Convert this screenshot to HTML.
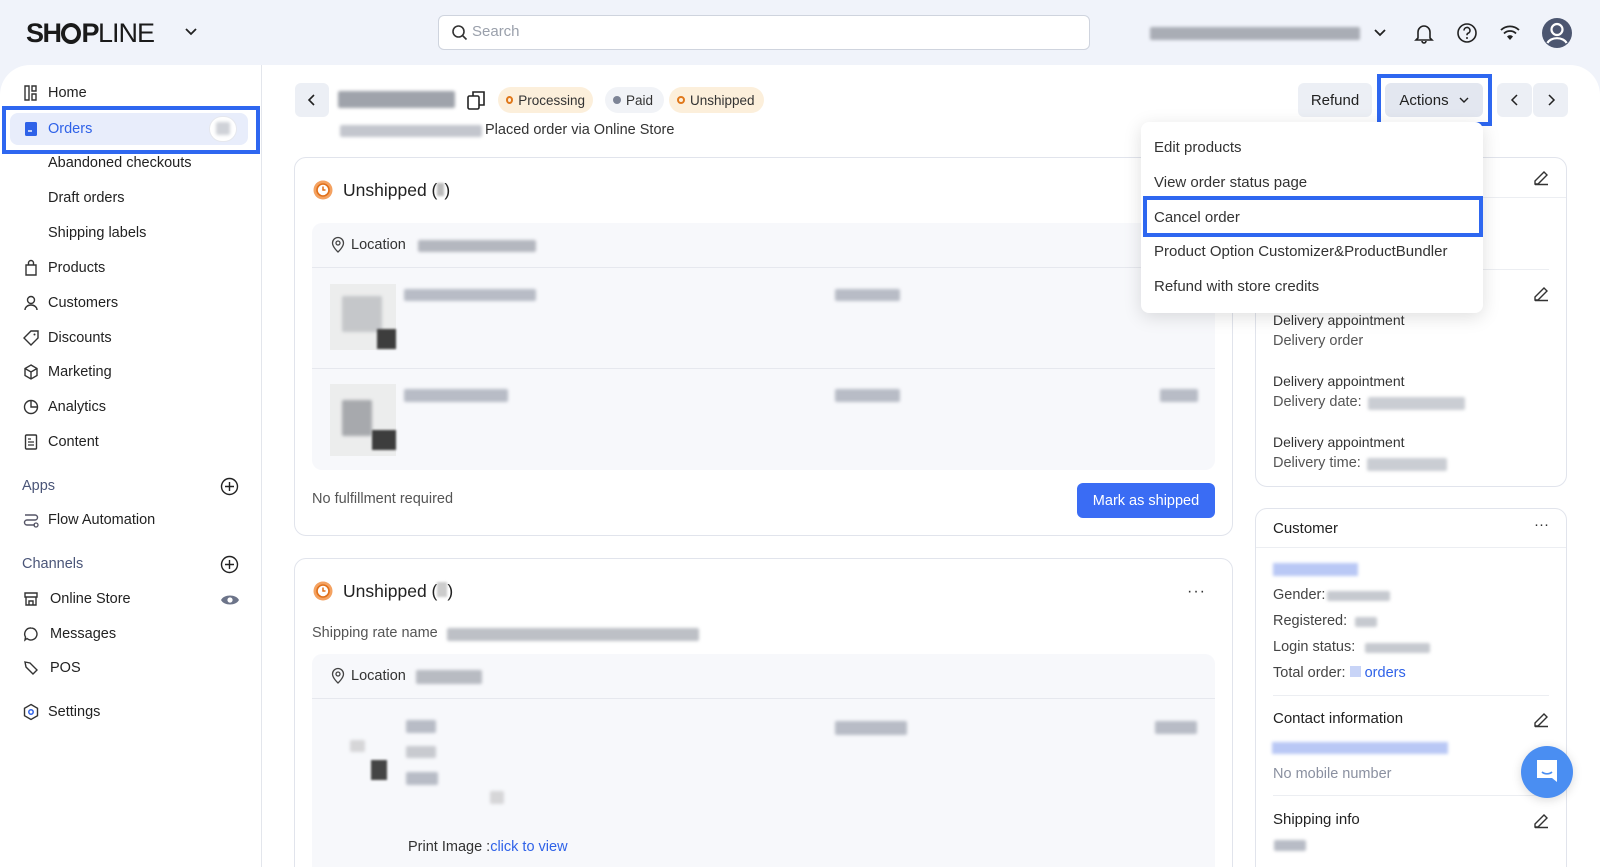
<!DOCTYPE html>
<html style="width:1600px;height:867px;overflow:hidden;background:#fff"><head><meta charset="utf-8"><style>
*{box-sizing:border-box;margin:0;padding:0}
body{width:1600px;height:867px;overflow:hidden;background:#fff;font-family:"Liberation Sans",sans-serif;color:#222;font-size:14px}
#w{position:relative;width:1600px;height:867px;overflow:hidden;background:#f0f3fa}
.a{position:absolute}
.blur{position:absolute;background:#b8bcc6;filter:blur(1.5px);border-radius:2px}
.blb{position:absolute;background:#b9c8f5;filter:blur(1.5px)}
.nav{position:absolute;left:48px;font-size:14.5px;color:#222}
.ic{position:absolute;left:22px;width:18px;height:18px}
.card{position:absolute;background:#fff;border:1px solid #e1e4ec;border-radius:12px}
.btn{position:absolute;background:#eceff5;border-radius:6px;font-size:15px;display:flex;align-items:center;justify-content:center;color:#222}
.badge{position:absolute;top:87px;height:26px;border-radius:13px;font-size:13.5px;display:flex;align-items:center;padding:0 8px;color:#333}
.dd{position:absolute;left:1154px;font-size:15px;color:#333}
.rt{position:absolute;left:1273px;font-size:14.5px;color:#333}
</style></head><body><div id="w">
<!-- top bar -->
<div class="a" style="left:26px;top:18px;font-size:27px;font-weight:bold;letter-spacing:-1.5px;color:#1a1a1a">SH<span style="display:inline-block;width:20px;height:21px;border:4px solid #1a1a1a;border-radius:50%;vertical-align:-2px;margin-right:1px"></span>P<span style="font-weight:normal;letter-spacing:-1px">LINE</span></div>
<svg class="a" style="left:184px;top:27px" width="14" height="10"><path d="M2 2l5 5 5-5" stroke="#222" stroke-width="1.8" fill="none"/></svg>
<div class="a" style="left:438px;top:15px;width:652px;height:35px;background:#fff;border:1px solid #cfd4de;border-radius:6px"></div>
<svg class="a" style="left:451px;top:24px" width="18" height="18"><circle cx="7.5" cy="7.5" r="5.5" stroke="#333" stroke-width="1.6" fill="none"/><path d="M11.5 11.5l4 4" stroke="#333" stroke-width="1.6"/></svg>
<div class="a" style="left:472px;top:23px;font-size:15px;color:#9aa0ab">Search</div>
<div class="blur" style="left:1150px;top:27px;width:210px;height:13px;background:#a9adb5"></div>
<svg class="a" style="left:1373px;top:28px" width="14" height="10"><path d="M2 2l5 5 5-5" stroke="#222" stroke-width="1.8" fill="none"/></svg>
<svg class="a" style="left:1413px;top:22px" width="22" height="22"><path d="M5 16V10a6 6 0 0 1 12 0v6l2 2H3z M9 19a2 2 0 0 0 4 0" stroke="#222" stroke-width="1.6" fill="none"/></svg>
<svg class="a" style="left:1456px;top:22px" width="22" height="22"><circle cx="11" cy="11" r="9" stroke="#222" stroke-width="1.6" fill="none"/><path d="M8 8.5a3 3 0 1 1 4 2.8c-1 .4-1 1-1 2" stroke="#222" stroke-width="1.6" fill="none"/><circle cx="11" cy="16" r="1" fill="#222"/></svg>
<svg class="a" style="left:1499px;top:23px" width="22" height="20"><path d="M2 7a13 13 0 0 1 18 0M5 10.5a8.5 8.5 0 0 1 12 0" stroke="#222" stroke-width="1.8" fill="none"/><path d="M8 13.5a4 4 0 0 1 6 0L11 17z" fill="#222"/></svg>
<svg class="a" style="left:1541px;top:17px" width="32" height="32"><circle cx="16" cy="16" r="15" fill="#4c5670"/><circle cx="16" cy="12.5" r="5.5" stroke="#fff" stroke-width="2.2" fill="none"/><path d="M6.5 26a10 7 0 0 1 19 0" stroke="#fff" stroke-width="2.2" fill="none"/></svg>

<!-- main white area -->
<div class="a" style="left:0;top:65px;width:1600px;height:802px;background:#fff;border-radius:30px 30px 0 0"></div>
<div class="a" style="left:261px;top:65px;width:1px;height:802px;background:#e3e6ec"></div>

<!-- sidebar -->
<svg class="ic" style="top:84px" viewBox="0 0 18 18"><path d="M3 2h4v14H3zM10 2h4v5h-4zM10 10h4v6h-4z" stroke="#333" stroke-width="1.4" fill="none"/></svg>
<div class="nav" style="top:85px">Home</div>
<div class="a" style="left:10px;top:113px;width:238px;height:32px;background:#e8edfb;border-radius:8px"></div>
<div class="a" style="left:2px;top:106px;width:258px;height:48px;border:4px solid #2e67f0"></div>
<svg class="ic" style="top:120px" viewBox="0 0 18 18"><rect x="3" y="2" width="12" height="14" rx="1.5" fill="#2f62e8"/><path d="M6 11h4" stroke="#fff" stroke-width="1.4"/></svg>
<div class="nav" style="top:121px;color:#2f62e8">Orders</div>
<div class="a" style="left:209px;top:116px;width:28px;height:26px;background:#fff;border-radius:13px;border:1px solid #e6e8ee"></div>
<div class="blur" style="left:216px;top:122px;width:14px;height:13px;background:#cfd2d8"></div>
<div class="nav" style="top:155px">Abandoned checkouts</div>
<div class="nav" style="top:190px">Draft orders</div>
<div class="nav" style="top:225px">Shipping labels</div>
<svg class="ic" style="top:259px" viewBox="0 0 18 18"><path d="M4 6h10v10H4zM6.5 6V4a2.5 2.5 0 0 1 5 0v2" stroke="#333" stroke-width="1.4" fill="none"/></svg>
<div class="nav" style="top:260px">Products</div>
<svg class="ic" style="top:294px" viewBox="0 0 18 18"><circle cx="9" cy="6" r="3.5" stroke="#333" stroke-width="1.4" fill="none"/><path d="M3 16a6 5 0 0 1 12 0" stroke="#333" stroke-width="1.4" fill="none"/></svg>
<div class="nav" style="top:295px">Customers</div>
<svg class="ic" style="top:329px" viewBox="0 0 18 18"><path d="M9 2h7v7l-7 7-7-7z" stroke="#333" stroke-width="1.4" fill="none"/><circle cx="12.5" cy="5.5" r="1" fill="#333"/></svg>
<div class="nav" style="top:330px">Discounts</div>
<svg class="ic" style="top:363px" viewBox="0 0 18 18"><path d="M9 2l6 3.5v7L9 16l-6-3.5v-7zM3 5.5L9 9l6-3.5M9 9v7" stroke="#333" stroke-width="1.4" fill="none"/></svg>
<div class="nav" style="top:364px">Marketing</div>
<svg class="ic" style="top:398px" viewBox="0 0 18 18"><circle cx="9" cy="9" r="6.5" stroke="#333" stroke-width="1.4" fill="none"/><path d="M9 2.5V9h6.5" stroke="#333" stroke-width="1.4" fill="none"/></svg>
<div class="nav" style="top:399px">Analytics</div>
<svg class="ic" style="top:433px" viewBox="0 0 18 18"><rect x="3.5" y="2" width="11" height="14" rx="1" stroke="#333" stroke-width="1.4" fill="none"/><path d="M6 6h3M6 9h6M6 12h6" stroke="#333" stroke-width="1.3"/></svg>
<div class="nav" style="top:434px">Content</div>
<div class="a" style="left:22px;top:478px;font-size:14.5px;color:#4a5578">Apps</div>
<svg class="a" style="left:220px;top:477px" width="19" height="19"><circle cx="9.5" cy="9.5" r="8" stroke="#222" stroke-width="1.4" fill="none"/><path d="M9.5 5v9M5 9.5h9" stroke="#222" stroke-width="1.4"/></svg>
<svg class="ic" style="top:511px" viewBox="0 0 18 18"><path d="M3 4h10a2.5 2.5 0 0 1 0 5H5a2.5 2.5 0 0 0 0 5h8" stroke="#556" stroke-width="1.4" fill="none"/><circle cx="14" cy="14" r="2" stroke="#556" stroke-width="1.3" fill="none"/></svg>
<div class="nav" style="top:512px">Flow Automation</div>
<div class="a" style="left:22px;top:556px;font-size:14.5px;color:#4a5578">Channels</div>
<svg class="a" style="left:220px;top:555px" width="19" height="19"><circle cx="9.5" cy="9.5" r="8" stroke="#222" stroke-width="1.4" fill="none"/><path d="M9.5 5v9M5 9.5h9" stroke="#222" stroke-width="1.4"/></svg>
<svg class="ic" style="top:590px" viewBox="0 0 18 18"><path d="M3 3h12v4H3zM4 7v8h10V7M7 15v-4h4v4" stroke="#333" stroke-width="1.4" fill="none"/></svg>
<div class="nav" style="left:50px;top:591px">Online Store</div>
<svg class="a" style="left:220px;top:593px" width="20" height="14"><path d="M1 7c3-6 15-6 18 0-3 6-15 6-18 0z" fill="#6c7489"/><circle cx="10" cy="7" r="2.6" fill="#fff"/></svg>
<svg class="ic" style="top:625px" viewBox="0 0 18 18"><path d="M9 3a6 6 0 1 1-4 10.5L3 15l.5-3A6 6 0 0 1 9 3z" stroke="#333" stroke-width="1.4" fill="none"/></svg>
<div class="nav" style="left:50px;top:626px">Messages</div>
<svg class="ic" style="top:659px" viewBox="0 0 18 18"><path d="M3 3l5 1 7 7-4 4-7-7z" stroke="#333" stroke-width="1.4" fill="none"/></svg>
<div class="nav" style="left:50px;top:660px">POS</div>
<svg class="ic" style="top:703px" viewBox="0 0 18 18"><path d="M9 1.5l6.5 3.75v7.5L9 16.5l-6.5-3.75v-7.5z" stroke="#333" stroke-width="1.4" fill="none"/><circle cx="9" cy="9" r="2.2" stroke="#2f62e8" stroke-width="1.5" fill="none"/></svg>
<div class="nav" style="top:704px">Settings</div>

<!-- header content -->
<div class="btn" style="left:295px;top:83px;width:34px;height:34px"><svg width="10" height="12"><path d="M7 1L2 6l5 5" stroke="#222" stroke-width="1.6" fill="none"/></svg></div>
<div class="blur" style="left:338px;top:91px;width:117px;height:17px;background:#9fa3ab"></div>
<svg class="a" style="left:466px;top:89px" width="22" height="22"><rect x="2" y="7" width="11" height="13" rx="1.5" stroke="#222" stroke-width="1.6" fill="none"/><path d="M7 7V3h11v13h-5" stroke="#222" stroke-width="1.6" fill="none"/></svg>
<div class="badge" style="left:498px;width:95px;background:#fcefdb"><span style="display:inline-block;width:8px;height:8px;border:2px solid #e0781b;border-radius:50%;margin-right:5px"></span>Processing</div>
<div class="badge" style="left:605px;width:59px;background:#f1f3f7"><span style="display:inline-block;width:8px;height:8px;background:#7d8496;border-radius:50%;margin-right:5px"></span>Paid</div>
<div class="badge" style="left:669px;width:95px;background:#fcefdb"><span style="display:inline-block;width:8px;height:8px;border:2px solid #e0781b;border-radius:50%;margin-right:5px"></span>Unshipped</div>
<div class="blur" style="left:340px;top:125px;width:142px;height:12px;background:#c3c6cd"></div>
<div class="a" style="left:485px;top:122px;font-size:14.5px;color:#333">Placed order via Online Store</div>

<div class="btn" style="left:1298px;top:83px;width:74px;height:34px">Refund</div>
<div class="btn" style="left:1385px;top:83px;width:98px;height:34px;background:#e3e7f0">Actions <svg style="margin-left:10px" width="10" height="8"><path d="M1 2l4 4 4-4" stroke="#222" stroke-width="1.4" fill="none"/></svg></div>
<div class="a" style="left:1377px;top:74px;width:115px;height:52px;border:4px solid #2e67f0"></div>
<div class="btn" style="left:1497px;top:83px;width:35px;height:34px"><svg width="10" height="12"><path d="M7 1L2 6l5 5" stroke="#222" stroke-width="1.5" fill="none"/></svg></div>
<div class="btn" style="left:1533px;top:83px;width:35px;height:34px"><svg width="10" height="12"><path d="M3 1l5 5-5 5" stroke="#222" stroke-width="1.5" fill="none"/></svg></div>

<!-- card 1 -->
<div class="card" style="left:294px;top:157px;width:939px;height:379px"></div>
<svg class="a" style="left:313px;top:180px" width="20" height="20"><circle cx="10" cy="10" r="9.5" fill="#f4a261"/><circle cx="10" cy="10" r="6" fill="#fff" stroke="#e0701a" stroke-width="1.6"/><path d="M10 6.5V10h2.5" stroke="#e0701a" stroke-width="1.5" fill="none"/></svg>
<div class="a" style="left:343px;top:180px;font-size:17.5px;color:#222">Unshipped (<span style="display:inline-block;width:7px;height:13px;background:#bbb;filter:blur(1px)"></span>)</div>
<div class="a" style="left:312px;top:223px;width:903px;height:247px;background:#f7f8fb;border-radius:10px"></div>
<div class="a" style="left:312px;top:267px;width:903px;height:1px;background:#e6e8ee"></div>
<div class="a" style="left:312px;top:368px;width:903px;height:1px;background:#e6e8ee"></div>
<svg class="a" style="left:331px;top:236px" width="14" height="18"><path d="M7 16s-5.5-5-5.5-9a5.5 5.5 0 0 1 11 0c0 4-5.5 9-5.5 9z" stroke="#444" stroke-width="1.3" fill="none"/><circle cx="7" cy="7" r="2" stroke="#444" stroke-width="1.3" fill="none"/></svg>
<div class="a" style="left:351px;top:237px;font-size:14.5px;color:#333">Location</div>
<div class="blur" style="left:418px;top:240px;width:118px;height:12px;background:#b4b7bf"></div>
<div class="a" style="left:330px;top:284px;width:66px;height:66px;background:#eceded"></div>
<div class="blur" style="left:342px;top:296px;width:40px;height:36px;background:#c5c7ca"></div>
<div class="a" style="left:377px;top:329px;width:19px;height:20px;background:#3d3d3d;filter:blur(1px)"></div>
<div class="blur" style="left:404px;top:289px;width:132px;height:12px"></div>
<div class="blur" style="left:835px;top:289px;width:65px;height:12px"></div>
<div class="a" style="left:330px;top:384px;width:66px;height:72px;background:#eceded"></div>
<div class="blur" style="left:342px;top:400px;width:30px;height:36px;background:#a7a9ad"></div>
<div class="a" style="left:372px;top:430px;width:24px;height:20px;background:#3d3d3d;filter:blur(1px)"></div>
<div class="blur" style="left:404px;top:389px;width:104px;height:13px"></div>
<div class="blur" style="left:835px;top:389px;width:65px;height:13px"></div>
<div class="blur" style="left:1160px;top:389px;width:38px;height:13px"></div>
<div class="a" style="left:312px;top:491px;font-size:14.5px;color:#555">No fulfillment required</div>
<div class="a" style="left:1077px;top:483px;width:138px;height:35px;background:#3a6cf4;border-radius:6px;color:#fff;font-size:14.5px;display:flex;align-items:center;justify-content:center">Mark as shipped</div>

<!-- card 2 -->
<div class="card" style="left:294px;top:558px;width:939px;height:330px"></div>
<svg class="a" style="left:313px;top:581px" width="20" height="20"><circle cx="10" cy="10" r="9.5" fill="#f4a261"/><circle cx="10" cy="10" r="6" fill="#fff" stroke="#e0701a" stroke-width="1.6"/><path d="M10 6.5V10h2.5" stroke="#e0701a" stroke-width="1.5" fill="none"/></svg>
<div class="a" style="left:343px;top:581px;font-size:17.5px;color:#222">Unshipped (<span style="display:inline-block;width:10px;height:15px;background:#ccc;filter:blur(1px)"></span>)</div>
<div class="a" style="left:1187px;top:583px;font-size:16px;letter-spacing:1px;color:#333">···</div>
<div class="a" style="left:312px;top:625px;font-size:14.5px;color:#555">Shipping rate name</div>
<div class="blur" style="left:447px;top:628px;width:252px;height:13px;background:#bdc0c6"></div>
<div class="a" style="left:312px;top:654px;width:903px;height:230px;background:#f7f8fb;border-radius:10px"></div>
<div class="a" style="left:312px;top:698px;width:903px;height:1px;background:#e6e8ee"></div>
<svg class="a" style="left:331px;top:667px" width="14" height="18"><path d="M7 16s-5.5-5-5.5-9a5.5 5.5 0 0 1 11 0c0 4-5.5 9-5.5 9z" stroke="#444" stroke-width="1.3" fill="none"/><circle cx="7" cy="7" r="2" stroke="#444" stroke-width="1.3" fill="none"/></svg>
<div class="a" style="left:351px;top:668px;font-size:14.5px;color:#333">Location</div>
<div class="blur" style="left:416px;top:670px;width:66px;height:14px;background:#b8bbc2"></div>
<div class="blur" style="left:350px;top:740px;width:15px;height:12px;background:#d6d6d8"></div>
<div class="a" style="left:371px;top:760px;width:16px;height:20px;background:#444;filter:blur(1px)"></div>
<div class="blur" style="left:406px;top:720px;width:30px;height:13px"></div>
<div class="blur" style="left:406px;top:746px;width:30px;height:12px;background:#c8cacf"></div>
<div class="blur" style="left:406px;top:772px;width:32px;height:13px"></div>
<div class="blur" style="left:490px;top:791px;width:14px;height:13px;background:#d6d6d8"></div>
<div class="blur" style="left:835px;top:721px;width:72px;height:14px"></div>
<div class="blur" style="left:1155px;top:721px;width:42px;height:13px"></div>
<div class="a" style="left:408px;top:839px;font-size:14.5px;color:#333">Print Image :<span style="color:#2f62e8">click to view</span></div>

<!-- right column card A -->
<div class="card" style="left:1255px;top:157px;width:312px;height:330px"></div>
<div class="a" style="left:1256px;top:197px;width:310px;height:1px;background:#eceef2"></div>
<div class="a" style="left:1273px;top:269px;width:276px;height:1px;background:#eceef2"></div>
<svg class="a" style="left:1532px;top:168px" width="18" height="18"><path d="M3 13l9-9 3 3-9 9H3zM3 16.5h13" stroke="#333" stroke-width="1.4" fill="none"/></svg>
<svg class="a" style="left:1532px;top:284px" width="18" height="18"><path d="M3 13l9-9 3 3-9 9H3zM3 16.5h13" stroke="#333" stroke-width="1.4" fill="none"/></svg>
<div class="rt" style="top:312px;font-size:14px">Delivery appointment</div>
<div class="rt" style="top:333px;color:#555">Delivery order</div>
<div class="rt" style="top:373px;font-size:14px">Delivery appointment</div>
<div class="rt" style="top:394px;color:#555">Delivery date:</div>
<div class="blur" style="left:1368px;top:397px;width:97px;height:13px;background:#cacdd3"></div>
<div class="rt" style="top:434px;font-size:14px">Delivery appointment</div>
<div class="rt" style="top:455px;color:#555">Delivery time:</div>
<div class="blur" style="left:1367px;top:458px;width:80px;height:13px;background:#cacdd3"></div>

<!-- customer card -->
<div class="card" style="left:1255px;top:508px;width:312px;height:380px"></div>
<div class="a" style="left:1256px;top:547px;width:310px;height:1px;background:#eceef2"></div>
<div class="rt" style="top:520px;font-size:15px;color:#222">Customer</div>
<div class="a" style="left:1534px;top:516px;font-size:15px;color:#333">···</div>
<div class="blb" style="left:1273px;top:563px;width:85px;height:13px"></div>
<div class="rt" style="top:587px;color:#444">Gender:</div>
<div class="blur" style="left:1327px;top:591px;width:63px;height:10px;background:#c6c9cf"></div>
<div class="rt" style="top:613px;color:#444">Registered:</div>
<div class="blur" style="left:1355px;top:617px;width:22px;height:10px;background:#c6c9cf"></div>
<div class="rt" style="top:639px;color:#444">Login status:</div>
<div class="blur" style="left:1365px;top:643px;width:65px;height:10px;background:#c6c9cf"></div>
<div class="rt" style="top:665px;color:#444">Total order: <span style="display:inline-block;width:11px;height:11px;background:#c8d4f7"></span> <span style="color:#2f62e8">orders</span></div>
<div class="a" style="left:1273px;top:695px;width:276px;height:1px;background:#eceef2"></div>
<div class="rt" style="top:710px;font-size:15px;color:#222">Contact information</div>
<svg class="a" style="left:1532px;top:710px" width="18" height="18"><path d="M3 13l9-9 3 3-9 9H3zM3 16.5h13" stroke="#333" stroke-width="1.4" fill="none"/></svg>
<div class="blb" style="left:1272px;top:742px;width:176px;height:12px"></div>
<div class="rt" style="top:766px;color:#8a90a0">No mobile number</div>
<div class="a" style="left:1273px;top:795px;width:276px;height:1px;background:#eceef2"></div>
<div class="rt" style="top:811px;font-size:15px;color:#222">Shipping info</div>
<svg class="a" style="left:1532px;top:811px" width="18" height="18"><path d="M3 13l9-9 3 3-9 9H3zM3 16.5h13" stroke="#333" stroke-width="1.4" fill="none"/></svg>
<div class="blur" style="left:1274px;top:840px;width:32px;height:11px"></div>
<div class="a" style="left:1521px;top:746px;width:52px;height:52px;border-radius:50%;background:#4a8ef2;box-shadow:0 2px 10px rgba(0,0,0,.15)"></div>
<svg class="a" style="left:1534px;top:758px" width="26" height="28"><path d="M3 2h20v22l-5-4H3z" fill="#fff"/><path d="M8 14a6 4 0 0 0 10 0" stroke="#4a8ef2" stroke-width="1.6" fill="none"/></svg>

<!-- dropdown -->
<div class="a" style="left:1141px;top:122px;width:342px;height:191px;background:#fff;border-radius:8px;box-shadow:0 4px 18px rgba(0,0,0,.13)"></div>
<div class="dd" style="top:139px">Edit products</div>
<div class="dd" style="top:174px">View order status page</div>
<div class="a" style="left:1143px;top:196px;width:340px;height:41px;border:4px solid #2e67f0"></div>
<div class="dd" style="top:209px">Cancel order</div>
<div class="dd" style="top:243px">Product Option Customizer&amp;ProductBundler</div>
<div class="dd" style="top:278px">Refund with store credits</div>
</div></body></html>
